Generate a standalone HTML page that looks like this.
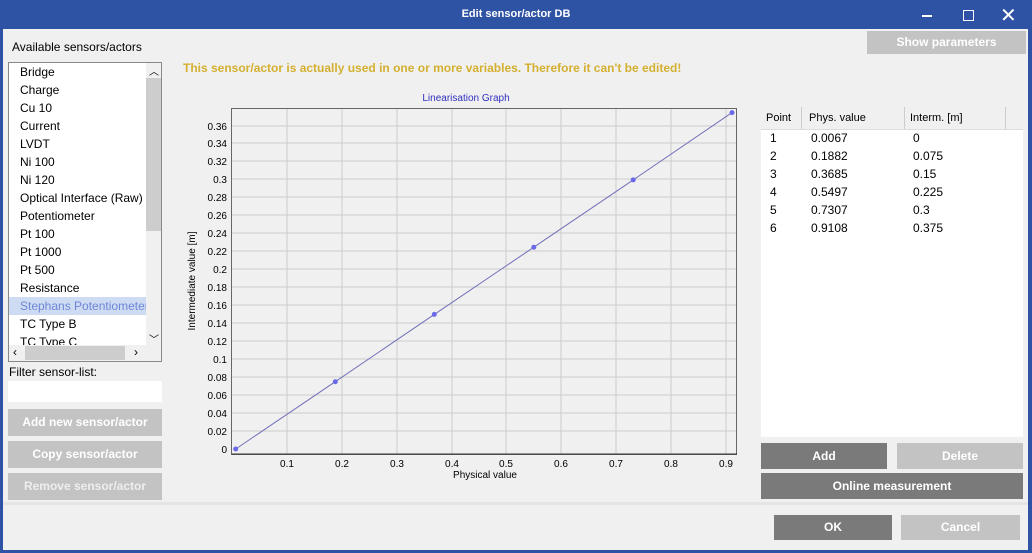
<!DOCTYPE html>
<html><head><style>
body{margin:0;width:1032px;height:553px;overflow:hidden;background:#2f53a4;font-family:"Liberation Sans",sans-serif;font-size:12px;color:#000;position:relative}
.a{position:absolute}
.btn{position:absolute;color:#fff;font-weight:bold;text-align:center;font-size:12px}
.g{background:#c3c3c3}.d{background:#7a7a7a}
.li{position:absolute;left:11px;height:18px;line-height:18px;white-space:nowrap}
.row{position:absolute;height:18px;line-height:18px}
</style></head><body>
<div class="a" style="left:0;top:0;width:1032px;height:29px;color:#fff;text-align:center;line-height:29px;font-weight:bold;font-size:11px">Edit sensor/actor DB</div>
<div class="a" style="left:922px;top:15px;width:10px;height:2px;background:#fff"></div>
<div class="a" style="left:963px;top:10px;width:9px;height:9px;border:1px solid #fff"></div>
<div class="a" style="left:1000px;top:3px;color:#fff;font-size:20px">✕</div>
<div class="a" style="left:3px;top:29px;width:1025px;height:521px;background:#f0f0f0">
 <div class="a" style="left:9px;top:11px">Available sensors/actors</div>
 <div class="btn g" style="left:864px;top:2px;width:159px;height:23px;line-height:23px">Show parameters</div>
 <div class="a" style="left:180px;top:32px;color:#d4b030;font-weight:bold">This sensor/actor is actually used in one or more variables. Therefore it can't be edited!</div>
 <div class="a" style="left:5px;top:33px;width:152px;height:298px;background:#fff;border:1px solid #888;overflow:hidden">
  <div class="a" style="left:0;top:234px;width:137px;height:18px;background:#cddcf3"></div>
  <div class="li" style="top:0">Bridge</div><div class="li" style="top:18px">Charge</div><div class="li" style="top:36px">Cu 10</div><div class="li" style="top:54px">Current</div><div class="li" style="top:72px">LVDT</div><div class="li" style="top:90px">Ni 100</div><div class="li" style="top:108px">Ni 120</div><div class="li" style="top:126px">Optical Interface (Raw)</div><div class="li" style="top:144px">Potentiometer</div><div class="li" style="top:162px">Pt 100</div><div class="li" style="top:180px">Pt 1000</div><div class="li" style="top:198px">Pt 500</div><div class="li" style="top:216px">Resistance</div>
  <div class="li" style="top:234px;color:#6f86d6">Stephans Potentiometer</div>
  <div class="li" style="top:252px">TC Type B</div><div class="li" style="top:270px;height:12px;overflow:hidden">TC Type C</div>
  <div class="a" style="left:137px;top:0;width:15px;height:282px;background:#f0f0f0"><div class="a" style="left:0;top:15px;width:15px;height:153px;background:#cdcdcd"></div><div class="a" style="left:3px;top:0;font-size:10px">︿</div><div class="a" style="left:3px;top:268px;font-size:10px">﹀</div></div>
  <div class="a" style="left:0;top:282px;width:152px;height:16px;background:#f0f0f0"><div class="a" style="left:16px;top:1px;width:100px;height:14px;background:#cdcdcd"></div><div class="a" style="left:4px;top:0">‹</div><div class="a" style="left:125px;top:0">›</div></div>
 </div>
 <div class="a" style="left:6px;top:336px">Filter sensor-list:</div>
 <div class="a" style="left:5px;top:352px;width:154px;height:21px;background:#fff"></div>
 <div class="btn g" style="left:5px;top:380px;width:154px;height:27px;line-height:27px">Add new sensor/actor</div>
 <div class="btn g" style="left:5px;top:412px;width:154px;height:27px;line-height:27px">Copy sensor/actor</div>
 <div class="btn g" style="left:5px;top:444px;width:154px;height:27px;line-height:27px;color:#eee">Remove sensor/actor</div>
 <div class="a" style="left:0;top:473px;width:1025px;height:3px;background:#e4e4e4"></div>
 <div class="btn d" style="left:771px;top:486px;width:118px;height:25px;line-height:25px">OK</div>
 <div class="btn g" style="left:898px;top:486px;width:119px;height:25px;line-height:25px">Cancel</div>
 <div class="a" style="left:758px;top:78px;width:262px;height:330px;background:#fff"></div>
 <div class="a" style="left:758px;top:78px;width:262px;height:22px;background:#f0f0f0;border-bottom:1px solid #ddd"></div>
 <div class="a" style="left:798px;top:78px;width:1px;height:22px;background:#ccc"></div><div class="a" style="left:901px;top:78px;width:1px;height:22px;background:#ccc"></div><div class="a" style="left:1002px;top:78px;width:1px;height:22px;background:#ccc"></div>
 <div class="row" style="left:763px;top:80px;font-size:11px">Point</div><div class="row" style="left:806px;top:80px;font-size:11px">Phys. value</div><div class="row" style="left:907px;top:80px;font-size:11px">Interm. [m]</div>
 <div class="row" style="left:767px;top:100px;line-height:18px">1<br>2<br>3<br>4<br>5<br>6</div>
 <div class="row" style="left:808px;top:100px">0.0067<br>0.1882<br>0.3685<br>0.5497<br>0.7307<br>0.9108</div>
 <div class="row" style="left:910px;top:100px">0<br>0.075<br>0.15<br>0.225<br>0.3<br>0.375</div>
 <div class="btn d" style="left:758px;top:414px;width:126px;height:26px;line-height:26px">Add</div>
 <div class="btn g" style="left:894px;top:414px;width:126px;height:26px;line-height:26px">Delete</div>
 <div class="btn d" style="left:758px;top:444px;width:262px;height:26px;line-height:26px">Online measurement</div>
</div>
<svg class="a" style="left:0;top:0" width="1032" height="553">
<g font-family="Liberation Sans" font-size="10" fill="#000">
<text x="466" y="101" fill="#3030c0" text-anchor="middle">Linearisation Graph</text>
<g stroke="#ccc" stroke-width="1">
<line x1="287" y1="108" x2="287" y2="454"/><line x1="342" y1="108" x2="342" y2="454"/><line x1="397" y1="108" x2="397" y2="454"/><line x1="452" y1="108" x2="452" y2="454"/><line x1="506" y1="108" x2="506" y2="454"/><line x1="561" y1="108" x2="561" y2="454"/><line x1="616" y1="108" x2="616" y2="454"/><line x1="671" y1="108" x2="671" y2="454"/><line x1="726" y1="108" x2="726" y2="454"/>
<line x1="232" x2="736" y1="431" y2="431"/><line x1="232" x2="736" y1="413" y2="413"/><line x1="232" x2="736" y1="395" y2="395"/><line x1="232" x2="736" y1="377" y2="377"/><line x1="232" x2="736" y1="359" y2="359"/><line x1="232" x2="736" y1="341" y2="341"/><line x1="232" x2="736" y1="323" y2="323"/><line x1="232" x2="736" y1="305" y2="305"/><line x1="232" x2="736" y1="287" y2="287"/><line x1="232" x2="736" y1="269" y2="269"/><line x1="232" x2="736" y1="251" y2="251"/><line x1="232" x2="736" y1="233" y2="233"/><line x1="232" x2="736" y1="215" y2="215"/><line x1="232" x2="736" y1="197" y2="197"/><line x1="232" x2="736" y1="179" y2="179"/><line x1="232" x2="736" y1="161" y2="161"/><line x1="232" x2="736" y1="143" y2="143"/><line x1="232" x2="736" y1="126" y2="126"/>
</g>
<rect x="231.5" y="108.5" width="505" height="346" fill="none" stroke="#666"/>
<line x1="232" y1="454" x2="737" y2="454" stroke="#333"/>
<g text-anchor="end">
<text x="227" y="453">0</text><text x="227" y="435">0.02</text><text x="227" y="417">0.04</text><text x="227" y="399">0.06</text><text x="227" y="381">0.08</text><text x="227" y="363">0.1</text><text x="227" y="345">0.12</text><text x="227" y="327">0.14</text><text x="227" y="309">0.16</text><text x="227" y="291">0.18</text><text x="227" y="273">0.2</text><text x="227" y="255">0.22</text><text x="227" y="237">0.24</text><text x="227" y="219">0.26</text><text x="227" y="201">0.28</text><text x="227" y="183">0.3</text><text x="227" y="165">0.32</text><text x="227" y="147">0.34</text><text x="227" y="130">0.36</text>
</g>
<g text-anchor="middle"><text x="287" y="467">0.1</text><text x="342" y="467">0.2</text><text x="397" y="467">0.3</text><text x="452" y="467">0.4</text><text x="506" y="467">0.5</text><text x="561" y="467">0.6</text><text x="616" y="467">0.7</text><text x="671" y="467">0.8</text><text x="726" y="467">0.9</text></g>
<text x="485" y="478" text-anchor="middle">Physical value</text>
<text transform="translate(195,281) rotate(-90)" text-anchor="middle">Intermediate value [m]</text>
<polyline fill="none" stroke="#7070b8" points="235.7,449 335.3,381.7 434.3,314.4 533.8,247.2 633.2,179.9 732,112.6"/>
<g fill="#6a6ae8"><circle cx="235.7" cy="449" r="2.5"/><circle cx="335.3" cy="381.7" r="2.5"/><circle cx="434.3" cy="314.4" r="2.5"/><circle cx="533.8" cy="247.2" r="2.5"/><circle cx="633.2" cy="179.9" r="2.5"/><circle cx="732" cy="112.6" r="2.5"/></g>
</g></svg>
</body></html>
